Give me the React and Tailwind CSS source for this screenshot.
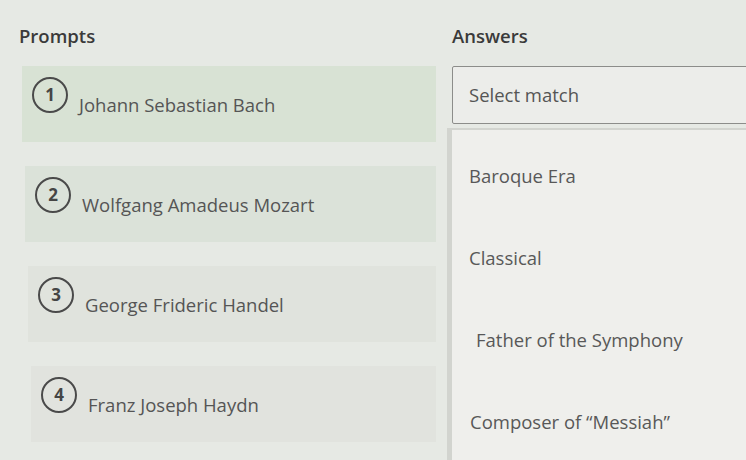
export default function App() {
  const prompts = [
    { n: "1", t: "Johann Sebastian Bach", ml: "ml-[3px]", bg: "bg-[#d8e2d4]" },
    { n: "2", t: "Wolfgang Amadeus Mozart", ml: "ml-[6px]", bg: "bg-[#dbe2d9]" },
    { n: "3", t: "George Frideric Handel", ml: "ml-[9px]", bg: "bg-[#e0e3dd]" },
    { n: "4", t: "Franz Joseph Haydn", ml: "ml-[12px]", bg: "bg-[#e1e3de]" },
  ];
  const answers = [
    { t: "Baroque Era", pl: "pl-[17px]" },
    { t: "Classical", pl: "pl-[17px]" },
    { t: "Father of the Symphony", pl: "pl-[24px]" },
    { t: "Composer of \u201cMessiah\u201d", pl: "pl-[18px]" },
  ];
  return (
    <div
      className="w-[746px] h-[460px] overflow-hidden bg-[#e6e9e4] flex"
      style={{ fontFamily: '"Open Sans", "Noto Sans", sans-serif' }}
    >
      <div className="w-[452px] shrink-0 pl-[19px] pt-[25px] pr-[16px]">
        <div className="h-[22px] leading-[22px] text-[18.5px] font-semibold text-[#3a3a3a]">Prompts</div>
        <div className="mt-[19px] flex flex-col gap-[24px]">
          {prompts.map((p) => (
            <div key={p.n} className={`${p.ml} ${p.bg} h-[76px] flex items-start pt-[11px] pl-[10px]`}>
              <div className="w-[36px] h-[36px] rounded-full border-[2.5px] border-[#4a4a4a] flex items-center justify-center text-[17px] font-bold text-[#454545] shrink-0">
                {p.n}
              </div>
              <div className="ml-[11px] mt-[16px] leading-[24px] text-[18.5px] text-[#555]">{p.t}</div>
            </div>
          ))}
        </div>
      </div>
      <div className="flex-1 pt-[25px] min-w-0">
        <div className="h-[22px] leading-[22px] text-[18.5px] font-semibold text-[#3a3a3a]">Answers</div>
        <div className="mt-[19px] h-[58px] w-[310px] border border-[#8c8d8a] rounded-[2px] bg-[#ecedea] flex items-center pl-[16px] text-[18.5px] text-[#555]">
          Select match
        </div>
        <div className="-ml-[5px] mt-[4px] w-[320px] h-[340px] bg-[#efefec] border-l-[5px] border-t-[2px] border-[#d2d4cf] pt-[5px]">
          {answers.map((a) => (
            <div key={a.t} className={`h-[82px] flex items-center ${a.pl} text-[18.5px] text-[#585858]`}>
              {a.t}
            </div>
          ))}
        </div>
      </div>
    </div>
  );
}
